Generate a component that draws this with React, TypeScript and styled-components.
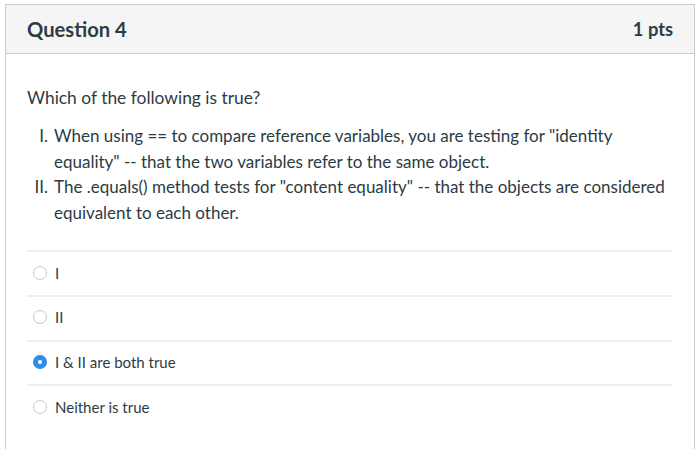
import React from 'react'
import { createGlobalStyle, styled } from 'styled-components'

const GlobalStyle = createGlobalStyle`
    html, body {
        margin: 0;
        padding: 0;
        background: #ffffff;
    }
    body {
        font-family: Lato, "Open Sans", "Liberation Sans", sans-serif;
        color: #2d3b45;
    }
`

type Answer = { id: string; label: string }

const answers: Answer[] = [
    { id: 'a1', label: 'I' },
    { id: 'a2', label: 'II' },
    { id: 'a3', label: 'I & II are both true' },
    { id: 'a4', label: 'Neither is true' },
]

const statements = [
    'When using == to compare reference variables, you are testing for "identity equality" -- that the two variables refer to the same object.',
    'The .equals() method tests for "content equality" -- that the objects are considered equivalent to each other.',
]

const App: React.FC = () => {
    const selected = 'a3'
    return (
        <>
            <GlobalStyle />
            <Page>
                <QuestionCard>
                    <CardHeader>
                        <QuestionName>Question 4</QuestionName>
                        <Points>1 pts</Points>
                    </CardHeader>
                    <CardBody>
                        <Prompt>Which of the following is true?</Prompt>
                        <Statements>
                            {statements.map((s, i) => (
                                <Statement key={i}>
                                    <Numeral>{i === 0 ? 'I.' : 'II.'}</Numeral>
                                    <span>{s}</span>
                                </Statement>
                            ))}
                        </Statements>
                        <AnswerList>
                            {answers.map(a => (
                                <AnswerRow key={a.id}>
                                    <Radio $checked={a.id === selected} />
                                    <AnswerLabel>{a.label}</AnswerLabel>
                                </AnswerRow>
                            ))}
                        </AnswerList>
                    </CardBody>
                </QuestionCard>
            </Page>
        </>
    )
}

const Page = styled.div`
    padding: 4px 5px 0 5px;
    height: 449px;
    box-sizing: border-box;
    overflow: hidden;
`

const QuestionCard = styled.div`
    border: 1px solid #c7cdd1;
    border-bottom: none;
    height: 445px;
    box-sizing: border-box;
    background: #ffffff;
`

const CardHeader = styled.div`
    height: 48px;
    background: #f5f5f5;
    border-bottom: 1px solid #c7cdd1;
    display: flex;
    align-items: center;
    justify-content: space-between;
    padding: 0 21px;
`

const QuestionName = styled.h2`
    margin: 0;
    font-size: 20.2px;
    font-weight: 700;
    color: #2d3b45;
`

const Points = styled.div`
    font-size: 18.3px;
    font-weight: 700;
    color: #2d3b45;
`

const CardBody = styled.div`
    padding: 31px 22px 0 21px;
`

const Prompt = styled.p`
    margin: 0;
    font-size: 17.4px;
    line-height: 26px;
`

const Statements = styled.ol`
    list-style: none;
    margin: 12px 0 0 0;
    padding: 0;
`

const Statement = styled.li`
    display: grid;
    grid-template-columns: 27px 1fr;
    font-size: 17px;
    line-height: 25.6px;
`

const Numeral = styled.span`
    text-align: right;
    padding-right: 6px;
`

const AnswerList = styled.div`
    margin-top: 25px;
    display: flex;
    flex-direction: column;
`

const AnswerRow = styled.label`
    display: flex;
    align-items: center;
    height: 40.7px;
    padding-bottom: 2px;
    border-top: 2px solid #eceef0;
    padding-left: 6px;
    gap: 8px;
`

const Radio = styled.span<{ $checked: boolean }>`
    width: 14px;
    height: 14px;
    border-radius: 50%;
    box-sizing: border-box;
    position: relative;
    flex-shrink: 0;
    border: ${p => (p.$checked ? 'none' : '1px solid #c4c8cc')};
    background: ${p => (p.$checked ? '#2f8ce8' : '#ffffff')};
    &::after {
        content: '';
        display: ${p => (p.$checked ? 'block' : 'none')};
        position: absolute;
        left: 5px;
        top: 5px;
        width: 4px;
        height: 4px;
        border-radius: 50%;
        background: #ffffff;
    }
`

const AnswerLabel = styled.span`
    font-size: 15px;
    color: #2d3b45;
`

export default App
